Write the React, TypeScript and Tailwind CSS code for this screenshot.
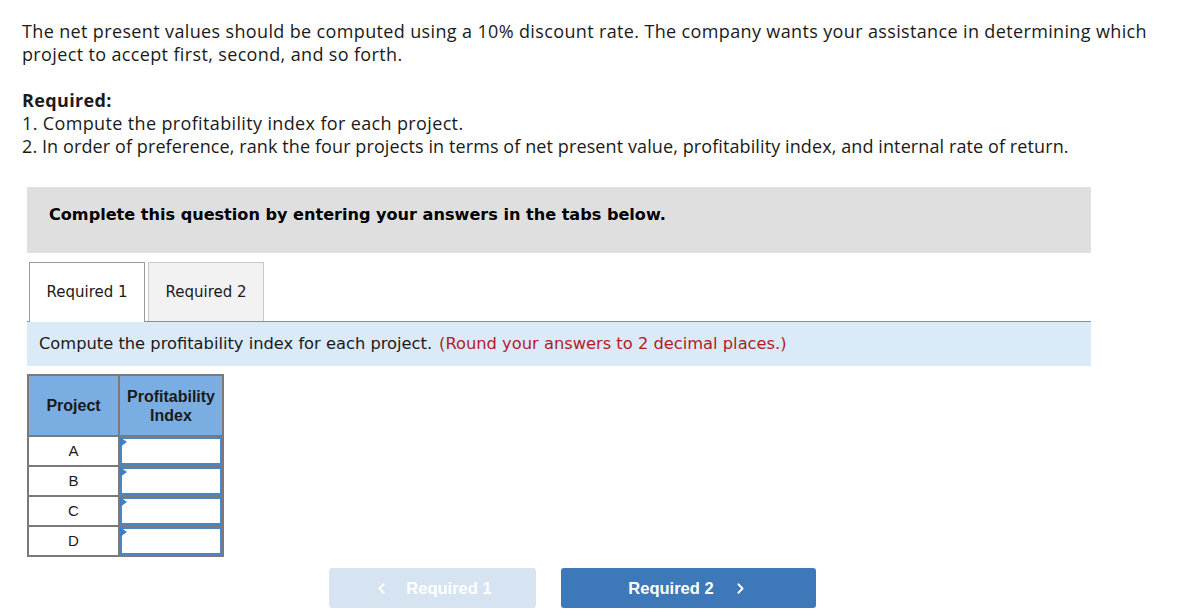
import { ChevronLeft, ChevronRight } from "lucide-react";

const rows = ["A", "B", "C", "D"];

const sans = { fontFamily: '"Open Sans", "Liberation Sans", sans-serif' };

export default function App() {
  return (
    <div className="min-h-[614px] w-[1199px] bg-white text-[#1a1a1a]">
      {/* 문제 본문 */}
      <div className="whitespace-nowrap px-[22px] pt-[20px] text-[18px] leading-[23px] tracking-[0.36px]" style={sans}>
        <p>
          The net present values should be computed using a 10% discount rate. The company wants your assistance in
          determining which
          <br />
          project to accept first, second, and so forth.
        </p>
        <p className="mt-[23px] font-bold">Required:</p>
        <p>1. Compute the profitability index for each project.</p>
        <p className="tracking-[0.1px]">
          2. In order of preference, rank the four projects in terms of net present value, profitability index, and
          internal rate of return.
        </p>
      </div>

      <div className="ml-[27px] mt-[29px] w-[1064px]" style={{ fontFamily: '"DejaVu Sans", Verdana, sans-serif' }}>
        <div className="h-[66px] bg-[#dfdfdf] pl-[22px] pt-[16px] text-[16.1px] font-bold text-black">
          Complete this question by entering your answers in the tabs below.
        </div>

        {/* 탭 */}
        <div className="mt-[9px] flex items-end border-b border-[#8f8f8f] pl-[2px]">
          <div className="-mb-px flex h-[60px] w-[116px] items-center justify-center border border-b-0 border-[#9a9a9a] bg-white text-[15px]">
            Required 1
          </div>
          <div className="ml-[3px] flex h-[59px] w-[116px] items-center justify-center border border-b-0 border-[#c8c8c8] bg-[#f2f2f2] text-[15px]">
            Required 2
          </div>
        </div>

        <div className="flex h-[44px] items-center bg-[#dbeaf8] pl-[12px] text-[16.3px]">
          <span>Compute the profitability index for each project.</span>
          <span className="ml-[7px] text-[#b11c25]">(Round your answers to 2 decimal places.)</span>
        </div>
      </div>

      {/* 표 */}
      <div className="ml-[27px] mt-[8px]" style={{ fontFamily: '"Liberation Sans", Arial, sans-serif' }}>
        <table className="border-collapse text-[16px]">
          <thead>
            <tr className="h-[61px] bg-[#7aaee3] font-bold text-[#1a1a1a]">
              <th className="w-[91px] border-2 border-[#7a7a7a] leading-[19px]">Project</th>
              <th className="w-[104px] border-2 border-[#7a7a7a] leading-[19px]">
                Profitability
                <br />
                Index
              </th>
            </tr>
          </thead>
          <tbody>
            {rows.map((r) => (
              <tr key={r} className="h-[30px]">
                <td className="border-2 border-[#7a7a7a] text-center text-[15px]">{r}</td>
                <td className="border-2 border-[#7a7a7a] p-0">
                  <div className="relative h-[28px] border-2 border-[#4a86c6] bg-white">
                    <span className="absolute -left-[2px] -top-[2px] h-0 w-0 border-y-[5px] border-l-[7px] border-y-transparent border-l-[#3f7fc4]" />
                  </div>
                </td>
              </tr>
            ))}
          </tbody>
        </table>
      </div>

      {/* 이동 버튼 */}
      <div
        className="mt-[11px] flex gap-[25px] pl-[329px] text-[16.5px] font-bold text-white"
        style={{ fontFamily: '"Liberation Sans", Arial, sans-serif' }}
      >
        <button
          type="button"
          className="flex h-[40px] w-[207px] items-center justify-center gap-[16px] rounded-[3px] bg-[#d6e4f2]"
        >
          <ChevronLeft size={17} strokeWidth={2.5} />
          Required 1
        </button>
        <button
          type="button"
          className="flex h-[40px] w-[255px] items-center justify-center gap-[18px] rounded-[3px] bg-[#3d79b8]"
        >
          Required 2
          <ChevronRight size={17} strokeWidth={2.5} />
        </button>
      </div>
    </div>
  );
}
